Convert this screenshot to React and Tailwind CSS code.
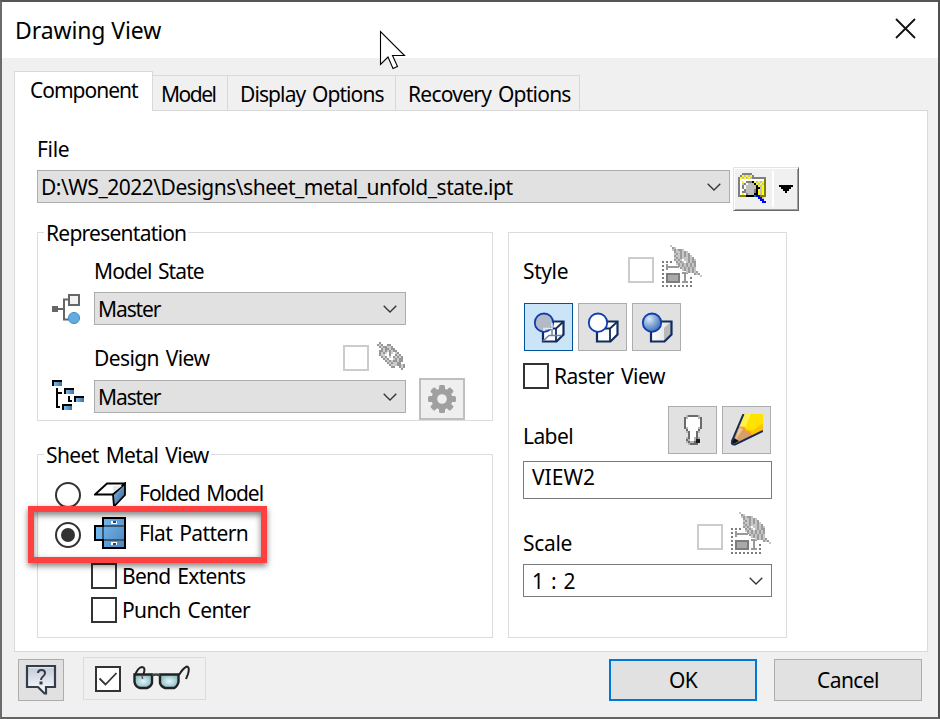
import React, { useState } from "react";

/* ===================== PIXEL ICONS ===================== */

const FOLDER = {
  rows: [
    "..ggggg.......",
    ".gylylyg......",
    "gylylylggggggg",
    "gwwwwwwwwwwwwo",
    "gwywgggkylylyo",
    "gwlgwlllkylylo",
    "gwgwlllllkylyo",
    "gwgwlllllkklyo",
    "gwwgllllgkylyo",
    "gwggllllgkylyo",
    "gwywglllkkylyo",
    "goookkkktbbooo",
    "..........bbl.",
    "...........bb.",
    "............bb",
  ],
  colors: {
    g: "#808080",
    y: "#ffff00",
    l: "#c0c0c0",
    w: "#ffffff",
    o: "#808000",
    k: "#000000",
    t: "#008080",
    b: "#0000ff",
  },
};

const LINK = {
  rows: [
    ".g............",
    "glg..gg.......",
    ".glggllg......",
    "..glgglgg.....",
    ".gglglglgg....",
    ".glglwglwlg...",
    ".gllwwgwwglg..",
    "..glgwlwglglg.",
    "...glgwwlglgg.",
    "....glglgglgg.",
    ".....glgllgg..",
    "......glllgglg",
    ".......gg..glg",
    "............g.",
  ],
  colors: { g: "#979797", l: "#cdcdcd", w: "#ffffff" },
};

const LEAF = {
  rows: [
    "l...............",
    ".gl.............",
    ".lglggl.........",
    "..gllglgl.......",
    "..lglglglg......",
    "..gllglglgl.....",
    "..lglglllglg....",
    "..glglwllglgl...",
    "...glglwlglgg...",
    "...lglglglglg...",
    "....glglglglg...",
    ".....glglglgl...",
    "......lglglgl...",
    "........lglglg..",
    "............glg.",
    "...............l",
  ],
  colors: { g: "#9b9b9b", l: "#c6c6c6", w: "#ffffff" },
};

const BULB = {
  rows: [
    ".lgggggl.",
    "glwwwwwlg",
    "gwwwwwwwg",
    "gwwwwwwwg",
    "gwwwwwwwg",
    "gwwwwwwwg",
    "glwwwwwlg",
    ".gwwwwwg.",
    ".lgwwwgl.",
    "..gwwwg..",
    "..gwwwg..",
    ".lgwwlgl.",
    ".glwwlkk.",
    ".lgllgkk.",
    "..lgggg..",
  ],
  colors: { g: "#6b6b6b", w: "#ffffff", l: "#b5b5b5", k: "#1c1c1c" },
};

const Cells = ({ icon, size = 2, x = 0, y = 0 }) =>
  icon.rows.map((row, r) =>
    row.split("").map((ch, c) =>
      icon.colors[ch] ? (
        <rect
          key={`${r}-${c}`}
          x={x + c * size}
          y={y + r * size}
          width={size}
          height={size}
          fill={icon.colors[ch]}
        />
      ) : null
    )
  );

const PixelIcon = ({ icon, className }) => (
  <svg
    width={icon.rows[0].length * 2}
    height={icon.rows.length * 2}
    shapeRendering="crispEdges"
    className={className}
  >
    <Cells icon={icon} />
  </svg>
);

/* ===================== DRAWN ICONS ===================== */

const ModelStateIcon = () => (
  <svg width="42" height="33" className="shrink-0">
    <path d="M6 17H12M17 7.500H12V27.500H18" fill="none" stroke="#666" strokeWidth="2" />
    <rect x="0" y="14" width="6" height="6" fill="#666" />
    <rect x="17" y="3" width="10" height="10" fill="#f2f2f2" stroke="#666" strokeWidth="2" />
    <circle cx="22" cy="26" r="5.600" fill="#62abe2" stroke="#4a8fc4" />
  </svg>
);

const TreeNode = ({ x, y }) => (
  <g>
    <rect x={x} y={y} width="10" height="6" fill="#000" />
    <rect x={x + 2} y={y + 2} width="8" height="4" fill="url(#node)" />
  </g>
);

const DesignViewIcon = () => (
  <svg width="42" height="33" shapeRendering="crispEdges" className="shrink-0">
    <defs>
      <linearGradient id="node">
        <stop offset="0" stopColor="#7cbcf0" />
        <stop offset="1" stopColor="#3f6f9f" />
      </linearGradient>
    </defs>
    <path d="M5 8V27H8M5 13H10M17 16V21H20" fill="none" stroke="#000" strokeWidth="2" />
    <TreeNode x={0} y={0} />
    <TreeNode x={12} y={8} />
    <TreeNode x={22} y={16} />
    <TreeNode x={10} y={24} />
  </svg>
);

const GearIcon = () => (
  <svg width="28" height="28" viewBox="-14 -14 28 28">
    {[0, 45, 90, 135].map((a) => (
      <rect
        key={a}
        x="-3"
        y="-14"
        width="6"
        height="28"
        rx="1.500"
        fill="#a0a0a0"
        transform={`rotate(${a})`}
      />
    ))}
    <circle r="10.500" fill="#a0a0a0" />
    <circle r="4.800" fill="#efefef" />
  </svg>
);

const InheritIcon = () => (
  <svg width="44" height="42" className="shrink-0">
    <g fill="none" stroke="#7d7d7d" strokeWidth="2" shapeRendering="crispEdges">
      <path d="M2 17H14M2 41H32M3 20V40M31 32V40" strokeDasharray="2 2" />
      <path d="M7 19V25M7 22H19M25 28V37M22 28H28M22 37H28" stroke="#999" />
      <rect x="7" y="29" width="12" height="8" fill="#a9a9a9" />
    </g>
    <Cells icon={LEAF} x={10} />
  </svg>
);

const ViewStyleIcon = ({ kind }) => (
  <svg width="47" height="46">
    <defs>
      <radialGradient id="ball" cx="0.35" cy="0.3" r="0.75">
        <stop offset="0" stopColor="#dceafa" />
        <stop offset="0.5" stopColor="#82a8d6" />
        <stop offset="1" stopColor="#3a6ab0" />
      </radialGradient>
      <linearGradient id="cubeFront">
        <stop offset="0" stopColor="#fff" />
        <stop offset="1" stopColor="#dedede" />
      </linearGradient>
    </defs>
    <path
      d="M18 23L26 18H38V30L31 37.500H18Z"
      fill={kind === "shaded" ? "url(#cubeFront)" : "#fff"}
    />
    {kind === "shaded" && <path d="M31 24L38 18V30L31 37.500Z" fill="#b9b9b9" />}
    <path
      d="M18 24V37.500H31.500L38.500 30.500V17.500H28"
      fill="none"
      stroke="#112c5c"
      strokeWidth="2.200"
    />
    {kind !== "shaded" && (
      <path d="M18 24.500H31V37M31 24.500L38 18" fill="none" stroke="#112c5c" strokeWidth="1.800" />
    )}
    {kind === "hidden" && (
      <path d="M27 18V31M18 37L24 31.500H37" fill="none" stroke="#6b82a8" strokeWidth="1.500" />
    )}
    <circle
      cx="19"
      cy="18.700"
      r="9.200"
      fill={kind === "hidden" ? "#b3bac5" : kind === "shaded" ? "url(#ball)" : "#fff"}
      stroke="#0f3db0"
      strokeWidth="1.800"
    />
    {kind === "hidden" && (
      <path d="M19 27V24.500H27V19" fill="none" stroke="#e6ebf2" strokeWidth="1.500" />
    )}
  </svg>
);

const PencilIcon = () => (
  <svg width="32" height="32">
    <path d="M12.500 0H32V16L19 22L9 14Z" fill="#ffe100" />
    <path d="M12.500 0H20L14 14L9 13Z" fill="#fff04d" />
    <path d="M20 22L15 15L32 3V16Z" fill="#ffc400" />
    <path d="M21 17L32 9V0H22L14 14Z" fill="#ffe300" />
    <path d="M8 13L13 13.500L15 17L19 18L20 22L4 29L2 27Z" fill="#d79f68" />
    <path d="M8 13L12 15L4 27Z" fill="#ecc59a" />
    <path d="M8 13.500L13 13.500L15 17L19 18L20 22" fill="none" stroke="#ff9d1e" strokeWidth="1.500" />
    <path d="M3 24L8 27L2.500 30L1 28Z" fill="#111" />
    <path
      d="M12.500 0L1 27Q0 31 4 30.500L32 17"
      fill="none"
      stroke="#1b2c4f"
      strokeWidth="2"
    />
  </svg>
);

const FoldedIcon = () => (
  <svg width="32" height="27">
    <defs>
      <linearGradient id="fold" x2="1" y2="1">
        <stop offset="0" stopColor="#8fc4ee" />
        <stop offset="1" stopColor="#2c5b8e" />
      </linearGradient>
    </defs>
    <path d="M1 12.500L13 1.500H31L19 12.500Z" fill="#fff" stroke="#000" strokeWidth="1.800" />
    <path d="M19 12.500L31 1.500V13L20 24.500Z" fill="url(#fold)" stroke="#000" strokeWidth="1.800" />
    <path d="M19 4H28L19 11Z" fill="#e3eaf2" />
  </svg>
);

const FlatIcon = () => (
  <svg width="32" height="32" shapeRendering="crispEdges">
    <defs>
      <linearGradient id="flat" x2="1" y2="1">
        <stop offset="0" stopColor="#74b9ef" />
        <stop offset="1" stopColor="#4a84bd" />
      </linearGradient>
    </defs>
    <rect x="1" y="9" width="9" height="14" fill="#6cb4ec" stroke="#000" strokeWidth="2" />
    <rect x="9" y="1" width="22" height="30" fill="url(#flat)" stroke="#000" strokeWidth="2" />
    <path d="M10 9H30M10 23H30M9 10V22" stroke="#40566b" strokeWidth="2" />
    <path d="M17 4H23V7H17ZM17 25H23V28H17Z" fill="#fff" />
    <path d="M19 4H22V6H19ZM19 26H22V28H19Z" fill="#27486e" />
  </svg>
);

const HelpIcon = () => (
  <svg width="32" height="32">
    <defs>
      <linearGradient id="bubble" x2="0" y2="1">
        <stop offset="0" stopColor="#ffffff" />
        <stop offset="0.100" stopColor="#c6cedb" />
        <stop offset="1" stopColor="#ffffff" />
      </linearGradient>
    </defs>
    <path
      d="M2 2H30V23H21V29.500H19.500L13 23H2Z"
      fill="url(#bubble)"
      stroke="#343d4c"
      strokeWidth="2.200"
    />
    <path d="M13 9Q13 6 16.500 6Q20 6 20 9Q20 11 18 12.500Q16 14 16 16" fill="none" stroke="#343d4c" strokeWidth="2" />
    <rect x="14.500" y="17.500" width="3" height="3" fill="#343d4c" />
  </svg>
);

const GlassesIcon = () => (
  <svg width="58" height="28">
    <defs>
      <radialGradient id="lens">
        <stop offset="0" stopColor="#e4f6f8" />
        <stop offset="1" stopColor="#8dbdc4" />
      </radialGradient>
    </defs>
    <path d="M2 10Q5 2.500 9 2Q13 2 10.500 9M46 10Q50 3 54 1.500Q57 2 55 9L53 14" fill="none" stroke="#222" strokeWidth="2" />
    <path d="M1.500 9.500H19V18Q18 22 14 23H7Q2.500 22 1.500 17Z" fill="url(#lens)" stroke="#222" strokeWidth="2.400" />
    <path d="M27 9.500H45.500V17Q44 22 41 23H32Q28 22 27 18Z" fill="url(#lens)" stroke="#222" strokeWidth="2.400" />
    <path d="M19 10.500Q23 8.500 27 10.500" fill="none" stroke="#444" strokeWidth="2.400" />
    <path d="M9 10L9.500 14" stroke="#555" strokeWidth="1.500" />
  </svg>
);

const Chevron = () => (
  <svg width="14" height="8" className="shrink-0">
    <path d="M0.700 0.700L7 7L13.300 0.700" fill="none" stroke="#333" strokeWidth="1.300" />
  </svg>
);

/* ===================== CONTROLS ===================== */

const Check = ({ checked = false, disabled = false, onClick }) => (
  <button
    onClick={onClick}
    disabled={disabled}
    className={`flex h-[26px] w-[26px] shrink-0 items-center justify-center border-2 bg-white ${
      disabled ? "border-[#ccc]" : "border-[#333]"
    }`}
  >
    {checked && (
      <svg width="20" height="16">
        <path d="M1.500 7.500L7.500 13.500L18.500 2" fill="none" stroke="#333" strokeWidth="1.800" />
      </svg>
    )}
  </button>
);

const Radio = ({ checked, onClick }) => (
  <button
    onClick={onClick}
    className="flex h-[26px] w-[26px] shrink-0 items-center justify-center rounded-full border-2 border-[#333] bg-white"
  >
    {checked && <span className="h-[14px] w-[14px] rounded-full bg-[#333]" />}
  </button>
);

const Combo = ({ children, className }) => (
  <div className={`flex h-[33px] shrink-0 items-center justify-between border pr-2 ${className}`}>
    {children}
    <Chevron />
  </div>
);

const Tab = ({ children, className }) => (
  <div className={`flex h-[35px] items-center border-t border-r border-[#d9d9d9] pt-px ${className}`}>
    {children}
  </div>
);

const Legend = ({ children, className }) => (
  <div className={`-mt-[13px] ml-[6px] h-[26px] self-start bg-white px-[2px] leading-[26px] ${className}`}>
    {children}
  </div>
);

const VIEW_STYLES = ["hidden", "visible", "shaded"];

export default function App() {
  const [flat, setFlat] = useState(true);
  const [style, setStyle] = useState("hidden");
  const [raster, setRaster] = useState(false);
  const [bend, setBend] = useState(false);
  const [punch, setPunch] = useState(false);
  const [preview, setPreview] = useState(true);

  return (
    <div className="relative flex h-[719px] w-[940px] flex-col overflow-hidden border-2 border-t-[#555] border-r-[#505050] border-b-[#65655f] border-l-[#6b6b6b] bg-[#f0f0f0] font-['Noto_Sans',sans-serif] text-[21px] leading-6 tracking-[-0.6px] whitespace-nowrap text-black">
      {/* Title bar */}
      <div className="flex h-14 shrink-0 items-center justify-between bg-white pr-[22px] pl-[13px]">
        <span className="text-[23px] tracking-[-0.1px]">Drawing View</span>
        <svg width="21" height="21" className="-mt-[3px]">
          <path d="M1 1L20 20M20 1L1 20" stroke="#111" strokeWidth="1.800" />
        </svg>
      </div>

      {/* Tabs */}
      <div className="flex h-[52px] shrink-0 items-end pl-3">
        <div className="z-10 -mb-px flex h-10 w-[139px] items-center border border-b-0 border-[#d9d9d9] bg-white pb-[3px] pl-[15px] tracking-[-1px]">
          Component
        </div>
        <Tab className="w-[75px] pl-2 tracking-[-1.5px]">Model</Tab>
        <Tab className="w-[168px] pl-3 tracking-[-0.9px] [word-spacing:2px]">Display Options</Tab>
        <Tab className="w-[184px] pl-3 tracking-[-0.75px] [word-spacing:2px]">Recovery Options</Tab>
      </div>

      {/* Component page */}
      <div className="ml-3 flex h-[542px] w-[914px] shrink-0 flex-col border border-[#d9d9d9] bg-white pt-[26px] pl-[22px]">
        <div className="h-6 tracking-[-0.3px]">File</div>
        <div className="mt-[6px] flex items-start">
          <Combo className="mt-[3px] w-[693px] border-[#adadad] bg-[#e1e1e1] pl-[3px] tracking-[-0.49px]">
            D:\WS_2022\Designs\sheet_metal_unfold_state.ipt
          </Combo>
          <button className="ml-[3px] flex h-11 w-[66px] items-start border border-t-[#e3e3e3] border-r-[#696969] border-b-[#696969] border-l-[#e3e3e3] bg-[#f0f0f0] shadow-[inset_1px_1px_0_#fff,inset_-1px_-1px_0_#a0a0a0]">
            <PixelIcon icon={FOLDER} className="mt-[5px] ml-1" />
            <span className="mt-[3px] ml-[6px] h-9 w-[2px] bg-white" />
            <svg width="14" height="8" shapeRendering="crispEdges" className="mt-[17px] ml-[5px]">
              <path d="M0 0H14V2H12V4H10V6H8V8H6V6H4V4H2V2H0Z" />
            </svg>
          </button>
        </div>

        <div className="mt-[21px] flex gap-[15px]">
          <div className="flex w-[456px] flex-col gap-[33px]">
            {/* Representation */}
            <div className="flex h-[189px] flex-col border border-[#dcdcdc]">
              <Legend className="tracking-[-0.75px]">Representation</Legend>
              <div className="mt-[13px] h-6 pl-14 tracking-[-0.9px] [word-spacing:2px]">Model State</div>
              <div className="mt-[9px] flex pl-[14px]">
                <ModelStateIcon />
                <Combo className="w-[312px] border-[#adadad] bg-[#e1e1e1] pl-[3px] tracking-[-1.1px]">Master</Combo>
              </div>
              <div className="mt-[17px] flex h-[29px] pl-14">
                <span className="w-[249px] pt-1 [word-spacing:2px]">Design View</span>
                <div className="pt-[3px]">
                  <Check disabled />
                </div>
                <PixelIcon icon={LINK} className="ml-2" />
              </div>
              <div className="mt-[7px] flex pl-[14px]">
                <div className="flex pt-[2px]">
                  <DesignViewIcon />
                  <Combo className="w-[312px] border-[#adadad] bg-[#e1e1e1] pl-[3px] tracking-[-1.1px]">Master</Combo>
                </div>
                <button className="ml-[13px] flex h-[42px] w-[46px] items-center justify-center border-2 border-[#bfbfbf] bg-[#efefef]">
                  <GearIcon />
                </button>
              </div>
            </div>

            {/* Sheet Metal View */}
            <div className="flex h-[184px] flex-col border border-[#dcdcdc]">
              <Legend className="[word-spacing:2px]">Sheet Metal View</Legend>
              <div className="mt-[14px] flex h-[26px] items-center pl-[17px]">
                <Radio checked={!flat} onClick={() => setFlat(false)} />
                <div className="ml-[13px] h-[27px] w-[45px]">
                  <FoldedIcon />
                </div>
                <span className="-mt-1 tracking-[-1px] [word-spacing:2px]">Folded Model</span>
              </div>
              <div className="mt-[9px] flex h-8 items-center pl-[17px]">
                <div className="pt-1">
                  <Radio checked={flat} onClick={() => setFlat(true)} />
                </div>
                <div className="ml-[13px] w-[45px]">
                  <FlatIcon />
                </div>
                <span className="[word-spacing:2px]">Flat Pattern</span>
              </div>
              <div className="mt-[14px] flex items-center gap-[5px] pl-[53px] tracking-[-0.7px] [word-spacing:2px]">
                <Check checked={bend} onClick={() => setBend(!bend)} />
                Bend Extents
              </div>
              <div className="mt-2 flex items-center gap-[5px] pl-[53px] [word-spacing:2px]">
                <Check checked={punch} onClick={() => setPunch(!punch)} />
                Punch Center
              </div>
            </div>
          </div>

          {/* Style, label and scale */}
          <div className="flex h-[406px] w-[279px] flex-col border border-[#dcdcdc] pl-[14px]">
            <div className="mt-3 flex h-[42px]">
              <span className="w-[105px] pt-[14px] tracking-[-0.4px]">Style</span>
              <div className="mr-[6px] pt-3">
                <Check disabled />
              </div>
              <InheritIcon />
            </div>
            <div className="mt-4 ml-px flex gap-[5px]">
              {VIEW_STYLES.map((kind) => (
                <button
                  key={kind}
                  onClick={() => setStyle(kind)}
                  className={`h-12 w-[49px] border ${
                    style === kind ? "border-[#005499] bg-[#cce4f7]" : "border-[#adadad] bg-[#e1e1e1]"
                  }`}
                >
                  <ViewStyleIcon kind={kind} />
                </button>
              ))}
            </div>
            <div className="mt-3 flex items-center gap-[5px] tracking-[-0.5px] [word-spacing:2px]">
              <Check checked={raster} onClick={() => setRaster(!raster)} />
              Raster View
            </div>
            <div className="mt-[17px] flex h-12 gap-[5px]">
              <span className="w-[140px] pt-[18px]">Label</span>
              <button className="flex h-12 w-[49px] items-center justify-center border border-[#adadad] bg-[#e1e1e1]">
                <PixelIcon icon={BULB} />
              </button>
              <button className="flex h-12 w-[49px] items-center justify-center border border-[#adadad] bg-[#e1e1e1]">
                <PencilIcon />
              </button>
            </div>
            <div className="mt-[7px] flex h-[38px] w-[249px] items-center border border-[#7a7a7a] pb-[6px] pl-2 tracking-normal">
              VIEW2
            </div>
            <div className="mt-[13px] flex h-[42px]">
              <span className="w-[174px] pt-[19px] tracking-[-0.3px]">Scale</span>
              <div className="mr-[6px] pt-3">
                <Check disabled />
              </div>
              <InheritIcon />
            </div>
            <Combo className="mt-[10px] w-[249px] border-[#7a7a7a] bg-white pl-2 tracking-normal [word-spacing:1.5px]">
              1 : 2
            </Combo>
          </div>
        </div>
      </div>

      {/* Footer */}
      <div className="flex pt-[5px] pl-4">
        <button className="mt-[2px] flex h-[42px] w-[46px] items-center justify-center border border-[#adadad] bg-[#e1e1e1]">
          <HelpIcon />
        </button>
        <div className="ml-[19px] flex h-[43px] w-[123px] items-center border border-[#dcdcdc] pl-[11px]">
          <Check checked={preview} onClick={() => setPreview(!preview)} />
          <div className="ml-3">
            <GlassesIcon />
          </div>
        </div>
        <button className="mt-[2px] ml-[403px] h-[42px] w-[148px] border-2 border-[#0078d7] bg-[#e1e1e1]">
          OK
        </button>
        <button className="mt-[2px] ml-[17px] h-[42px] w-[148px] border border-[#adadad] bg-[#e1e1e1]">
          Cancel
        </button>
      </div>

      {/* Highlight over the chosen option */}
      <div className="pointer-events-none absolute top-[504px] left-[26px] h-[57px] w-[239px] border-[6px] border-[#ff4040] shadow-[0_3px_6px_rgba(0,0,0,0.5),inset_0_3px_6px_rgba(0,0,0,0.5)]" />

      {/* Mouse pointer */}
      <svg width="28" height="42" className="pointer-events-none absolute top-[28px] left-[377px]">
        <path
          d="M1.500 1.500V34.500L9 27L14 38.500L18.500 36.500L13.500 25.500H25.500Z"
          fill="#fff"
          stroke="#000"
          strokeWidth="1.100"
        />
      </svg>
    </div>
  );
}
